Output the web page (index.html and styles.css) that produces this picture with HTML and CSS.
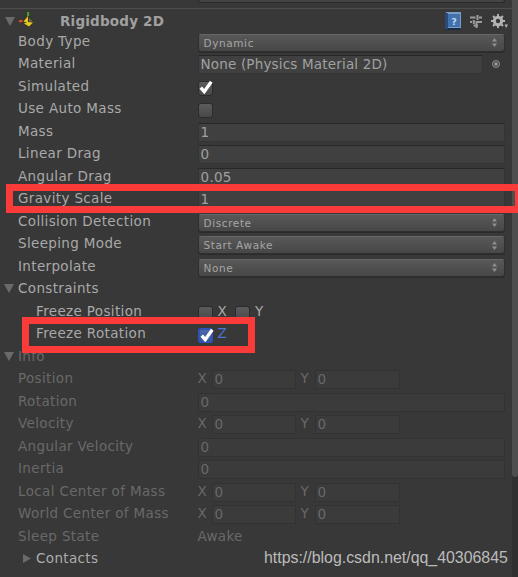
FILE: index.html
```html
<!DOCTYPE html>
<html lang="en">
<head>
<meta charset="utf-8">
<title>Rigidbody 2D</title>
<link rel="stylesheet" href="styles.css">
</head>
<body>
<div class="window">
  <main class="inspector">
    <div class="prev-button"></div>
    <header class="header">
      <svg class="fold" viewBox="0 0 10 9"><path d="M0 0H10L5 9Z"/></svg>
      <svg class="logo" viewBox="0 0 15 15">
        <path d="M8 0h2.200v5H8Z" fill="#4f9a2c"/>
        <path d="M0 8h5v2.200H0Z" fill="#e0482c"/>
        <circle cx="9" cy="9.500" r="5.500" fill="#37352c"/>
        <path d="M9 4 4.500 9.500 9 11Z" fill="#e6c822"/>
        <path d="M5 11.500 9 10 14 10.500 10 14.500Z" fill="#e6c822"/>
        <path d="M10 6 14 9.500 10 9.500Z" fill="#6f6a3a"/>
      </svg>
      <h1 class="title">Rigidbody 2D</h1>
      <div class="tools">
        <svg class="book" viewBox="0 0 16 18">
          <rect x="0" y="1" width="15" height="17" fill="#1c2c46"/>
          <rect x="1" y="0" width="15" height="16" fill="#7c9cc6"/>
          <rect x="3" y="2" width="12" height="13" fill="#4272ad"/>
          <rect x="0" y="1" width="3" height="16" fill="#2c4a78"/>
          <text x="6.500" y="12.500" class="book-q">?</text>
        </svg>
        <svg class="sliders" viewBox="0 0 12 13">
          <path d="M0 2.500H5.500M9 2.500H12M0 7H2M5.500 7H12M3.500 10.500H8" stroke="#9c9c9c" stroke-width="2" fill="none"/>
          <path d="M7.500 0V5M3.800 5V9M6.500 8V13" stroke="#9c9c9c" stroke-width="2" fill="none"/>
        </svg>
        <svg class="gear" viewBox="0 0 17 15">
          <circle cx="7" cy="7" r="3.800" fill="none" stroke="#b4b4b4" stroke-width="2.800"/>
          <path d="M7 0V14M0 7H14M2 2L12 12M12 2L2 12" stroke="#b4b4b4" stroke-width="1.900"/>
          <circle cx="7" cy="7" r="2.200" fill="#383838"/>
          <path d="M13.500 10.500H17L15.200 14Z" fill="#b4b4b4"/>
        </svg>
      </div>
    </header>

    <div class="row"><span class="label">Body Type</span><div class="popup">Dynamic<svg class="updown" viewBox="0 0 5 9"><path d="M2.500 0 5 3.500H0ZM2.500 9 0 5.500H5Z"/></svg></div></div>
    <div class="row"><span class="label">Material</span><div class="object"><div class="field object-field">None (Physics Material 2D)</div><span class="picker"></span></div></div>
    <div class="row"><span class="label">Simulated</span><span class="check"><svg class="tick" viewBox="0 0 12 12"><path d="M1.500 6.500 4.500 10 10.500 1.500" fill="none" stroke="#fff" stroke-width="2.800"/></svg></span></div>
    <div class="row"><span class="label">Use Auto Mass</span><span class="check"></span></div>
    <div class="row"><span class="label">Mass</span><div class="field">1</div></div>
    <div class="row"><span class="label">Linear Drag</span><div class="field">0</div></div>
    <div class="row"><span class="label">Angular Drag</span><div class="field">0.05</div></div>
    <div class="row"><span class="label">Gravity Scale</span><div class="field">1</div></div>
    <div class="row"><span class="label">Collision Detection</span><div class="popup">Discrete<svg class="updown" viewBox="0 0 5 9"><path d="M2.500 0 5 3.500H0ZM2.500 9 0 5.500H5Z"/></svg></div></div>
    <div class="row"><span class="label">Sleeping Mode</span><div class="popup">Start Awake<svg class="updown" viewBox="0 0 5 9"><path d="M2.500 0 5 3.500H0ZM2.500 9 0 5.500H5Z"/></svg></div></div>
    <div class="row"><span class="label">Interpolate</span><div class="popup">None<svg class="updown" viewBox="0 0 5 9"><path d="M2.500 0 5 3.500H0ZM2.500 9 0 5.500H5Z"/></svg></div></div>
    <div class="row section"><svg class="fold fold-section" viewBox="0 0 10 9"><path d="M0 0H10L5 9Z"/></svg><span class="label">Constraints</span></div>
    <div class="row indent"><span class="label">Freeze Position</span><div class="axes"><span class="check"></span><span class="axis">X</span><span class="check"></span><span class="axis">Y</span></div></div>
    <div class="row indent"><span class="label">Freeze Rotation</span><div class="axes"><span class="check check-blue"><svg class="tick" viewBox="0 0 12 12"><path d="M1.500 6.500 4.500 10 10.500 1.500" fill="none" stroke="#fff" stroke-width="2.800"/></svg></span><span class="axis axis-blue">Z</span></div></div>
    <div class="row section"><svg class="fold fold-section" viewBox="0 0 10 9"><path d="M0 0H10L5 9Z"/></svg><span class="label dim">Info</span></div>

    <div class="row dim"><span class="label">Position</span><div class="vec"><span class="axis">X</span><div class="field">0</div><span class="axis">Y</span><div class="field">0</div></div></div>
    <div class="row dim"><span class="label">Rotation</span><div class="field">0</div></div>
    <div class="row dim"><span class="label">Velocity</span><div class="vec"><span class="axis">X</span><div class="field">0</div><span class="axis">Y</span><div class="field">0</div></div></div>
    <div class="row dim"><span class="label">Angular Velocity</span><div class="field">0</div></div>
    <div class="row dim"><span class="label">Inertia</span><div class="field">0</div></div>
    <div class="row dim"><span class="label">Local Center of Mass</span><div class="vec"><span class="axis">X</span><div class="field">0</div><span class="axis">Y</span><div class="field">0</div></div></div>
    <div class="row dim"><span class="label">World Center of Mass</span><div class="vec"><span class="axis">X</span><div class="field">0</div><span class="axis">Y</span><div class="field">0</div></div></div>
    <div class="row dim"><span class="label">Sleep State</span><span class="value">Awake</span></div>
    <div class="row contacts"><svg class="fold-right" viewBox="0 0 9 10"><path d="M0 0 9 5 0 10Z"/></svg><span class="label">Contacts</span></div>
  </main>
  <div class="scrollbar"><div class="thumb"></div></div>
</div>
<div class="mark mark-gravity"></div>
<div class="mark mark-rotation"></div>
<div class="watermark">https://blog.csdn.net/qq_40306845</div>
</body>
</html>
```
FILE: styles.css
```css
* { box-sizing: border-box; }
html, body { margin: 0; height: 100%; overflow: hidden; }
body {
  position: relative;
  background: #383838;
  color: #a9a9a9;
  font: 13.5px/22.5px "DejaVu Sans", sans-serif;
}
.window { display: flex; height: 577px; }
.inspector { flex: 1; min-width: 0; padding: 0 7px 0 18px; }
.scrollbar { width: 6px; background: #303030; }
.thumb { height: 477px; background: #4e4e4e; border-radius: 0 0 3px 3px; }

.prev-button {
  height: 3px; margin-left: 180px;
  background: #444; border: 1px solid #2a2a2a; border-top: 0;
  border-radius: 0 0 3px 3px;
}
.header {
  height: 21.75px; margin: 5px -7px 0 -18px;
  border-top: 1px solid #4e4e4e;
  display: flex; align-items: center; padding: 4px 4px 0 5px;
}
.fold { width: 10px; height: 9px; fill: #6a6a6a; flex: none; }
.logo { width: 15px; height: 15px; margin: -3px 0 0 4px; flex: none; }
.title { font-size: 13.5px; font-weight: 700; color: #a0a0a0; margin: 0 0 0 26px; letter-spacing: .2px; flex: 1; line-height: 17px; }
.tools { display: flex; align-items: center; gap: 9px; }
.book { width: 16px; height: 18px; }
.book-q { font: 700 9px "DejaVu Sans", sans-serif; fill: #c5d8ee; }
.sliders { width: 12px; height: 13px; }
.gear { width: 17px; height: 15px; }

.row { height: 22.5px; display: flex; align-items: center; position: relative; }
.label { width: 179.500px; flex: none; letter-spacing: .35px; white-space: nowrap; }
.indent .label { padding-left: 18px; }
.fold-section { position: absolute; left: -14px; top: 7px; }
.dim { color: #696969; }
.dim .field { color: #696969; background: #3b3b3b; border-color: #323232; }

.popup {
  flex: 1; height: 18px; margin-top: 3px; padding: 0 7px 0 5px;
  background: linear-gradient(#585858, #474747);
  border: 1px solid #2f2f2f; border-top-color: #666; border-radius: 3px;
  box-shadow: 0 1px 0 #2b2b2b;
  font-size: 10.5px; line-height: 16px; letter-spacing: .6px; color: #a6a6a6;
  display: flex; align-items: center; justify-content: space-between;
}
.updown { width: 5px; height: 9px; fill: #8f8f8f; }
.field {
  flex: 1; min-width: 0; height: 19px; margin-top: 2px; padding: 0 2px;
  background: #404040; border: 1px solid #343434; border-top-color: #272727;
  line-height: 17px; letter-spacing: .3px; color: #a0a0a0;
}
.object { flex: 1; display: flex; align-items: center; }
.object-field { margin-top: 1px; padding-right: 0; letter-spacing: .18px; }
.picker { width: 8px; height: 8px; margin: 0 5px 0 9px; border-radius: 50%; background: #383838; border: 1.500px solid #8f8f8f; box-shadow: inset 0 0 0 1px #383838, inset 0 0 0 3px #8f8f8f; }

.check {
  width: 15px; height: 15px; flex: none; position: relative; margin-top: 4px;
  background: linear-gradient(#5c5c5c, #484848);
  border: 1px solid #2b2b2b; border-radius: 3px;
}
.check-blue { background: linear-gradient(#4c6aa8, #3c5796); border: 2px solid #2f52b8; }
.tick { position: absolute; left: 0; top: -2px; width: 14px; height: 14px; }
.axes { display: flex; align-items: center; }
.axis { letter-spacing: .3px; margin: 0 8px 0 5px; }
.axis-blue { color: #4a73d8; }
.vec { flex: 1; display: flex; align-items: center; }
.vec .axis { margin: 0; width: 14px; }
.vec .field { flex: none; width: 84px; margin-right: 5px; }
.vec .field:last-child { margin-right: 0; width: 85px; }
.value { letter-spacing: .3px; }
.contacts .label { padding-left: 18px; color: #adadad; }
.fold-right { position: absolute; left: 5px; top: 7px; width: 8px; height: 9px; fill: #6a6a6a; }

.mark { position: absolute; border: 7px solid #fb3a3a; }
.mark-gravity { left: 6px; top: 184px; width: 516px; height: 29px; }
.mark-rotation { left: 22px; top: 317px; width: 233px; height: 36px; }
.watermark {
  position: absolute; left: 264px; top: 546px;
  font: 15.9px/24px "Liberation Sans", sans-serif; color: #bcbcbc;
}
```
